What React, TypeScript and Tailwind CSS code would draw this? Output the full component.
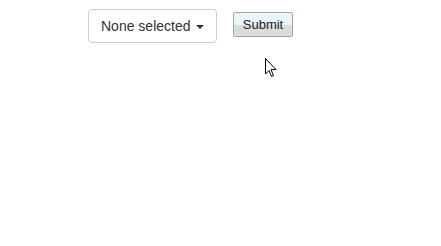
import React from 'react';

export default function App() {
  return (
    <div className="w-[441px] h-[246px] bg-white relative" style={{ fontFamily: '"Liberation Sans", Arial, sans-serif' }}>
      <div className="flex items-start pl-[88px] pt-[9px] gap-4">
        <button className="h-[34px] w-[129px] flex items-center pl-[12px] bg-white border border-[#cccccc] rounded-[4px] text-[14px] text-[#333333]">
          <span>None selected</span>
          <span className="ml-[5px] mt-[1px] w-0 h-0 border-l-[4px] border-r-[4px] border-t-[4px] border-l-transparent border-r-transparent border-t-[#333333]"></span>
        </button>
        <button className="mt-[3px] h-[25px] w-[60px] flex flex-col border border-[#a3a3a3] rounded-[2px] overflow-hidden relative text-[13px] text-[#222222]">
          <span className="h-1/2 w-full bg-[#e8f6fc]"></span>
          <span className="h-1/2 w-full bg-[#dcdcdc]"></span>
          <span className="absolute inset-0 flex items-center justify-center">Submit</span>
        </button>
      </div>
      <svg className="absolute left-[265px] top-[58px]" width="12" height="20" viewBox="0 0 12 20">
        <path d="M0.5 0.5 L0.5 16 L4 12.5 L6.5 18.5 L8.5 17.6 L6 11.6 L11 11.6 Z" fill="#ffffff" stroke="#000000" strokeWidth="1" strokeLinejoin="miter" />
      </svg>
    </div>
  );
}
